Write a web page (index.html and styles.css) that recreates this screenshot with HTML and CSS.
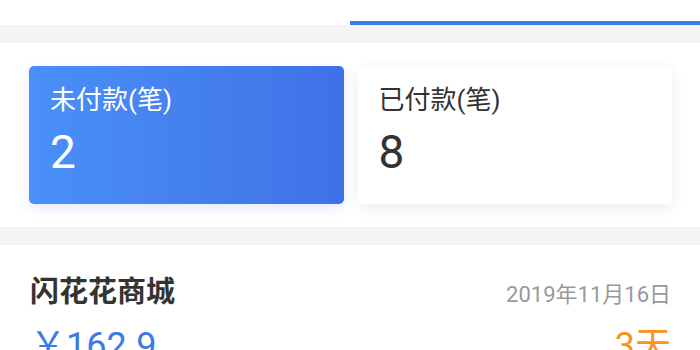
FILE: index.html
```html
<!DOCTYPE html>
<html lang="zh">
<head>
<meta charset="utf-8">
<link rel="stylesheet" href="styles.css">
</head>
<body>
<div class="tabs">
  <div class="tab"></div>
  <div class="tab active"></div>
</div>
<div class="gap"></div>
<section class="summary">
  <div class="card card-blue">
    <div class="label">未付款(笔)</div>
    <div class="count">2</div>
  </div>
  <div class="card card-white">
    <div class="label">已付款(笔)</div>
    <div class="count">8</div>
  </div>
</section>
<div class="gap"></div>
<section class="order">
  <div class="row">
    <div class="shop">闪花花商城</div>
    <div class="date">2019年11月16日</div>
  </div>
  <div class="row">
    <div class="price">￥162.9</div>
    <div class="days">3天</div>
  </div>
</section>
</body>
</html>
```
FILE: styles.css
```css
html, body {
  margin: 0;
  padding: 0;
  background: #ffffff;
  font-family: Roboto, "Noto Sans CJK SC", sans-serif;
  overflow: hidden;
}
.tabs {
  display: flex;
  height: 25px;
  background: #ffffff;
}
.tab {
  flex: 1;
}
.tab.active {
  border-bottom: 4px solid #3d7ae4;
  box-sizing: border-box;
}
.gap {
  height: 18px;
  background: #f4f4f4;
}
.summary {
  display: flex;
  gap: 14px;
  padding: 23px 28px 23px 29px;
}
.card {
  flex: 1;
  height: 138px;
  box-sizing: border-box;
  border-radius: 5px;
  padding: 16px 21px 0;
}
.card-blue {
  background: linear-gradient(90deg, #4a90f9 0%, #3f71e6 100%);
  color: #ffffff;
  box-shadow: 0 4px 12px rgba(60, 110, 220, 0.15);
}
.card-white {
  background: #ffffff;
  color: #333333;
  box-shadow: 0 4px 14px rgba(0, 0, 0, 0.08);
}
.label {
  font-size: 26px;
  line-height: 36px;
}
.count {
  margin-top: 7px;
  font-size: 46px;
  line-height: 54px;
}
.order {
  padding: 27px 29px 0 30px;
}
.row {
  display: flex;
  justify-content: space-between;
  align-items: baseline;
}
.shop {
  font-size: 29px;
  line-height: 40px;
  font-weight: bold;
  color: #333333;
}
.date {
  font-size: 22px;
  line-height: 40px;
  color: #999999;
}
.row + .row {
  margin-top: 9px;
}
.price {
  font-size: 36px;
  line-height: 44px;
  color: #3d7ae4;
}
.days {
  font-size: 36px;
  line-height: 44px;
  color: #f7931e;
}
```
